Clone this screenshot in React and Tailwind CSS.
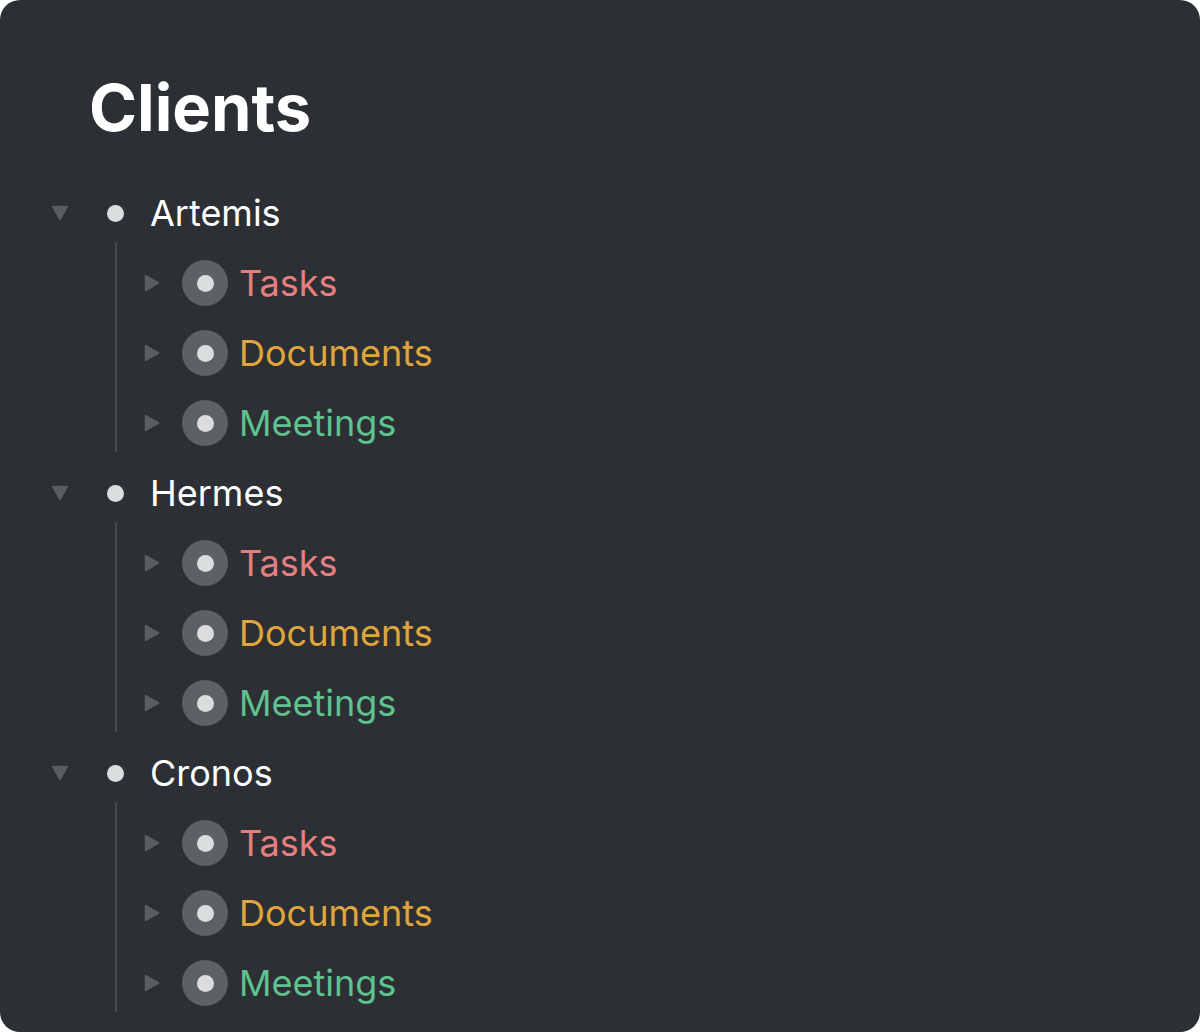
import React from 'react';

const CLIENTS = ['Artemis', 'Hermes', 'Cronos'];

const CHILDREN = [
    { label: 'Tasks', color: 'text-[#e67e7f]' },
    { label: 'Documents', color: 'text-[#e0a63c]' },
    { label: 'Meetings', color: 'text-[#5ec28f]' },
];

const ArrowDown = () => (
    <svg width="18" height="16" viewBox="0 0 18 16">
        <path d="M1.5 1.5 H16.5 L9 14.5 Z" fill="#5a5e62" stroke="#5a5e62" strokeWidth="1.5" strokeLinejoin="round" />
    </svg>
);

const ArrowRight = () => (
    <svg width="16" height="18" viewBox="0 0 16 18">
        <path d="M1.5 1.5 V16.5 L14.5 9 Z" fill="#5a5e62" stroke="#5a5e62" strokeWidth="1.5" strokeLinejoin="round" />
    </svg>
);

const ChildRow = ({ label, color, last }) => (
    <div className={`flex items-center h-[70px] shrink-0 ${last ? 'mb-[-6px]' : ''}`}>
        <div className="w-[32px] ml-[19px] flex justify-center">
            <ArrowRight />
        </div>
        <div className="w-[46px] h-[46px] ml-[14px] rounded-full bg-[#5d6165] flex items-center justify-center">
            <div className="w-[17px] h-[17px] rounded-full bg-[#dadcdd]"></div>
        </div>
        <span className={`ml-[11px] text-[36px] leading-none ${color}`}>{label}</span>
    </div>
);

const ClientBlock = ({ name }) => (
    <div className="flex flex-col">
        <div className="flex items-center h-[70px]">
            <div className="w-[32px] ml-[44px] flex justify-center">
                <ArrowDown />
            </div>
            <div className="w-[46px] ml-[16px] flex justify-center">
                <div className="w-[17px] h-[17px] rounded-full bg-[#dadcdd]"></div>
            </div>
            <span className="ml-[12px] text-[36px] leading-none text-white">{name}</span>
        </div>
        <div className="flex flex-col ml-[115px] border-l-2 border-[#464a4f] -mt-[6px] mb-[6px] pt-[6px]">
            {CHILDREN.map((c, i) => (
                <ChildRow key={c.label} {...c} last={i === CHILDREN.length - 1} />
            ))}
        </div>
    </div>
);

export default function App() {
    return (
        <div className="bg-white w-[1200px] h-[1032px]" style={{ fontFamily: 'Inter, "Noto Sans", sans-serif' }}>
            <div className="w-full h-full bg-[#2c3035] rounded-[20px] overflow-hidden">
                <h1 className="pt-[75px] pl-[89px] text-[65px] leading-none font-bold text-white h-[178px]">
                    Clients
                </h1>
                {CLIENTS.map((name) => (
                    <ClientBlock key={name} name={name} />
                ))}
            </div>
        </div>
    );
}
